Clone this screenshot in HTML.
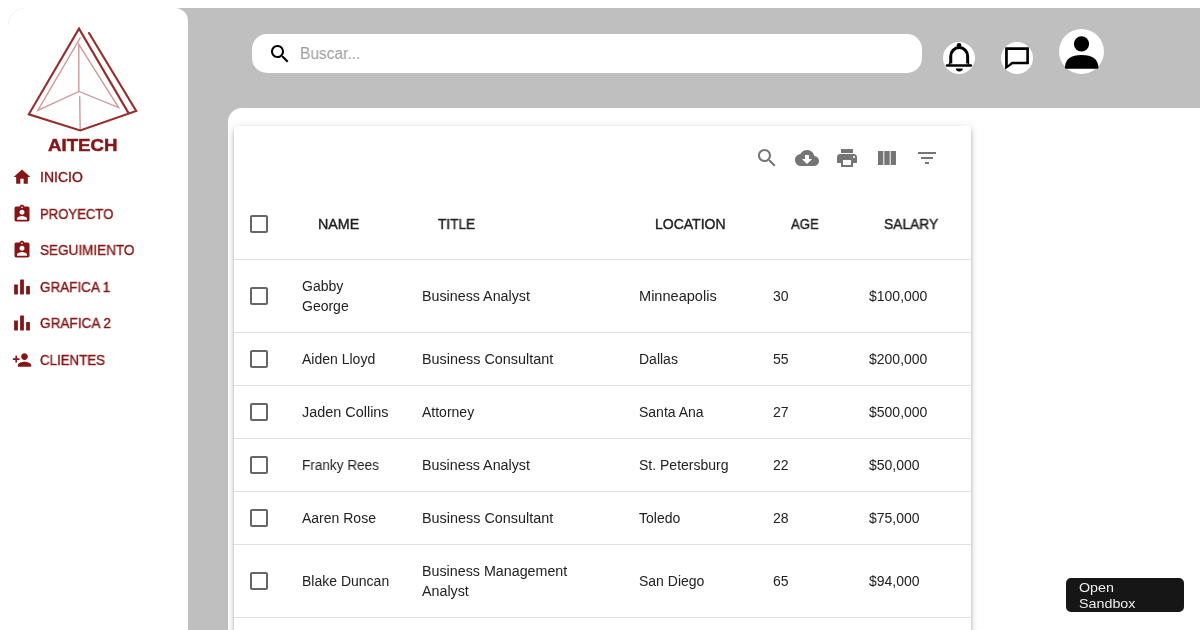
<!DOCTYPE html>
<html>
<head>
<meta charset="utf-8">
<style>
*{box-sizing:border-box;margin:0;padding:0}
html,body{width:1200px;height:630px;overflow:hidden;background:#fff;font-family:"Liberation Sans",sans-serif}
.nav,.th,.td,.ph,#logo-t,#sandbox{will-change:transform}
.abs{position:absolute}
#gray{position:absolute;left:8px;top:8px;width:1192px;height:622px;background:#bfbfbf;border-top-left-radius:18px}
#side{position:absolute;left:8px;top:8px;width:180px;height:622px;background:#fff;border-radius:18px 13px 0 0}
#content{position:absolute;left:228px;top:108px;width:972px;height:522px;background:#fff;border-top-left-radius:14px}
#card{position:absolute;left:234px;top:126px;width:737px;height:600px;background:#fff;border-radius:4px;
 box-shadow:0px 2px 4px -1px rgba(0,0,0,0.2),0px 4px 5px 0px rgba(0,0,0,0.14),0px 1px 10px 0px rgba(0,0,0,0.12)}
.nav{position:absolute;left:40px;height:20px;line-height:20px;font-size:14px;color:#861616;white-space:nowrap;transform-origin:0 0;-webkit-text-stroke:0.4px #861616}
#search{position:absolute;left:252px;top:34px;width:670px;height:39px;background:#fff;border-radius:15px}
.ph{position:absolute;left:300px;top:42px;height:24px;line-height:24px;font-size:16px;color:#9a9a9a;white-space:nowrap;transform-origin:0 0}
.circ{position:absolute;background:#fff;border-radius:50%}
.th{position:absolute;height:20px;line-height:20px;font-size:14px;color:#212121;white-space:nowrap;transform-origin:0 0;-webkit-text-stroke:0.4px #212121}
.td{position:absolute;line-height:20px;font-size:14px;color:#212121;white-space:nowrap;transform-origin:0 0}
.hr{position:absolute;left:234px;width:737px;height:1px;background:#e0e0e0}
.ico{position:absolute}
#sandbox{position:absolute;left:1066px;top:578px;width:118px;height:34px;background:#161616;border-radius:5px}
#sbt{position:absolute;left:1079px;top:580px;color:#eee;font-size:13px;line-height:15.8px;transform:scaleX(1.1);transform-origin:0 0;white-space:nowrap}
#logo-t{position:absolute;left:47.5px;transform:scaleX(1.08);top:135px;font-size:17.3px;line-height:20px;font-weight:bold;color:#861616;white-space:nowrap;transform-origin:0 0;-webkit-text-stroke:0.5px #861616}
</style>
</head>
<body>
<div id="gray"></div>
<div id="side"></div>
<div id="content"></div>
<div id="card"></div>
<svg class="ico" style="left:0;top:0" width="188" height="160" viewBox="0 0 188 160">
<g fill="none" stroke-linecap="round" stroke-linejoin="miter">
<path stroke="#cf9a9a" stroke-width="1.4" d="M80.2 37.8 L37.8 110.5 L79 91.4 L118.6 107.6 L78.8 44.5 L78.8 91.4 M79.7 96.7 L80.2 130"/>
<path stroke="#982c2c" stroke-width="2.1" d="M89 33 L136.2 111 L80.2 130.5 L28.8 114.3 L79 28.6 L128.1 112.4"/>
</g></svg>
<div id="logo-t">AITECH</div>
<div class="nav" style="top:167px;transform:scaleX(1.0)">INICIO</div>
<div class="nav" style="top:204px;transform:scaleX(0.936)">PROYECTO</div>
<div class="nav" style="top:240px;transform:scaleX(0.967)">SEGUIMIENTO</div>
<div class="nav" style="top:277px;transform:scaleX(0.962)">GRAFICA 1</div>
<div class="nav" style="top:313px;transform:scaleX(0.971)">GRAFICA 2</div>
<div class="nav" style="top:350px;transform:scaleX(0.95)">CLIENTES</div>
<svg class="ico" style="left:12px;top:167px" width="20" height="20" viewBox="0 0 24 24"><path fill="#861616" d="M10 20v-6h4v6h5v-8h3L12 3 2 12h3v8z"/></svg>
<svg class="ico" style="left:12px;top:204px" width="20" height="20" viewBox="0 0 24 24"><path fill="#861616" d="M19 3h-4.18C14.4 1.84 13.3 1 12 1c-1.3 0-2.4.84-2.82 2H5c-1.1 0-2 .9-2 2v14c0 1.1.9 2 2 2h14c1.1 0 2-.9 2-2V5c0-1.1-.9-2-2-2zm-7 0c.55 0 1 .45 1 1s-.45 1-1 1-1-.45-1-1 .45-1 1-1zm0 4c1.66 0 3 1.34 3 3s-1.34 3-3 3-3-1.34-3-3 1.34-3 3-3zm6 12H6v-1.4c0-2 4-3.1 6-3.1s6 1.1 6 3.1V19z"/></svg>
<svg class="ico" style="left:12px;top:240px" width="20" height="20" viewBox="0 0 24 24"><path fill="#861616" d="M19 3h-4.18C14.4 1.84 13.3 1 12 1c-1.3 0-2.4.84-2.82 2H5c-1.1 0-2 .9-2 2v14c0 1.1.9 2 2 2h14c1.1 0 2-.9 2-2V5c0-1.1-.9-2-2-2zm-7 0c.55 0 1 .45 1 1s-.45 1-1 1-1-.45-1-1 .45-1 1-1zm0 4c1.66 0 3 1.34 3 3s-1.34 3-3 3-3-1.34-3-3 1.34-3 3-3zm6 12H6v-1.4c0-2 4-3.1 6-3.1s6 1.1 6 3.1V19z"/></svg>
<svg class="ico" style="left:0;top:0" width="40" height="400"><g fill="#861616"><rect rx="0.4" x="14.1" y="284.4" width="3.8" height="10.100000000000023"/><rect rx="0.4" x="20.1" y="279.6" width="3.8" height="14.899999999999977"/><rect rx="0.4" x="26.1" y="286.1" width="3.8" height="8.399999999999977"/></g></svg>
<svg class="ico" style="left:0;top:0" width="40" height="400"><g fill="#861616"><rect rx="0.4" x="14.1" y="320.4" width="3.8" height="10.100000000000023"/><rect rx="0.4" x="20.1" y="315.6" width="3.8" height="14.899999999999977"/><rect rx="0.4" x="26.1" y="322.1" width="3.8" height="8.399999999999977"/></g></svg>
<svg class="ico" style="left:12px;top:350px" width="20" height="20" viewBox="0 0 24 24"><path fill="#861616" d="M15 12c2.21 0 4-1.79 4-4s-1.79-4-4-4-4 1.79-4 4 1.79 4 4 4zm-9-2V7H4v3H1v2h3v3h2v-3h3v-2H6zm9 4c-2.67 0-8 1.34-8 4v2h16v-2c0-2.66-5.33-4-8-4z"/></svg>
<div id="search"></div>
<svg class="ico" style="left:268px;top:42px" width="24" height="24" viewBox="0 0 24 24"><path fill="#000" d="M15.5 14h-.79l-.28-.27C15.41 12.59 16 11.11 16 9.5 16 5.91 13.09 3 9.5 3S3 5.91 3 9.5 5.91 16 9.5 16c1.61 0 3.09-.59 4.23-1.57l.27.28v.79l5 4.99L20.49 19l-4.99-5zm-6 0C7.01 14 5 11.99 5 9.5S7.01 5 9.5 5 14 7.01 14 9.5 11.99 14 9.5 14z"/></svg>
<div class="ph" style="transform:scaleX(0.97)">Buscar...</div>
<div class="circ" style="left:943px;top:42px;width:32px;height:32px"></div>
<div class="circ" style="left:1001px;top:42px;width:32px;height:32px"></div>
<div class="circ" style="left:1059px;top:29px;width:45px;height:45px"></div>
<svg class="ico" style="left:0;top:0" width="1200" height="100" viewBox="0 0 1200 100">
<g stroke="#000" fill="none" stroke-width="3">
<path d="M950.75 63.5 V56.2 A8.45 8.6 0 0 1 967.65 56.2 V63.5"/>
</g>
<path stroke="#000" stroke-width="2.6" stroke-linecap="round" d="M947.1 65.5 H970.9"/>
<path fill="#000" d="M949.2 62 Q949.2 64.5 946.5 64.5 H951 Z M968.7 62 Q968.7 64.5 971.5 64.5 H967 Z"/>
<circle cx="959" cy="45.3" r="2.3" fill="#000"/>
<path fill="#000" d="M955.8 68.6 H962.8 A3.5 2.8 0 0 1 955.8 68.6 Z"/>
<path fill="#000" fill-rule="evenodd" d="M1005.6 47.2 H1028.4 Q1028.9 47.2 1028.9 47.7 V63.8 Q1028.9 64.3 1028.4 64.3 H1012.6 L1006 69 Q1005.1 69.4 1005.1 68.6 V47.7 Q1005.1 47.2 1005.6 47.2 Z M1007.8 49.9 V65.2 L1011.6 61.7 H1026.3 V49.9 Z"/>
<circle cx="1081.5" cy="43.8" r="7.6" fill="#000"/>
<path fill="#000" d="M1064.9 67.2 Q1065.5 54.9 1081.6 54.9 Q1097.8 54.9 1098.4 67.2 Q1098.4 68.7 1097 68.7 H1066.3 Q1064.9 68.7 1064.9 67.2 Z"/>
</svg>
<svg class="ico" style="left:755px;top:146px" width="24" height="24" viewBox="0 0 24 24"><path fill="#757575" d="M15.5 14h-.79l-.28-.27C15.41 12.59 16 11.11 16 9.5 16 5.91 13.09 3 9.5 3S3 5.91 3 9.5 5.91 16 9.5 16c1.61 0 3.09-.59 4.23-1.57l.27.28v.79l5 4.99L20.49 19l-4.99-5zm-6 0C7.01 14 5 11.99 5 9.5S7.01 5 9.5 5 14 7.01 14 9.5 11.99 14 9.5 14z"/></svg>
<svg class="ico" style="left:795px;top:146px" width="24" height="24" viewBox="0 0 24 24"><path fill="#757575" d="M19.35 10.04C18.67 6.59 15.64 4 12 4 9.11 4 6.6 5.64 5.35 8.04 2.34 8.36 0 10.91 0 14c0 3.31 2.69 6 6 6h13c2.76 0 5-2.24 5-5 0-2.64-2.05-4.78-4.65-4.96zM17 13l-5 5-5-5h3V9h4v4h3z"/></svg>
<svg class="ico" style="left:835px;top:146px" width="24" height="24" viewBox="0 0 24 24"><path fill="#757575" d="M19 8H5c-1.66 0-3 1.34-3 3v6h4v4h12v-4h4v-6c0-1.66-1.34-3-3-3zm-3 11H8v-5h8v5zm3-7c-.55 0-1-.45-1-1s.45-1 1-1 1 .45 1 1-.45 1-1 1zm-1-9H6v4h12V3z"/></svg>
<svg class="ico" style="left:875px;top:146px" width="24" height="24" viewBox="0 0 24 24"><path fill="#757575" d="M14.67 5v14H9.33V5h5.34zm1 14H21V5h-5.33v14zm-7.34 0V5H3v14h5.33z"/></svg>
<svg class="ico" style="left:915px;top:146px" width="24" height="24" viewBox="0 0 24 24"><path fill="#757575" d="M10 18h4v-2h-4v2zM3 6v2h18V6H3zm3 7h12v-2H6v2z"/></svg>
<div class="th" style="left:318px;top:214px;transform:scaleX(1.02)">NAME</div>
<div class="th" style="left:438px;top:214px;transform:scaleX(0.974)">TITLE</div>
<div class="th" style="left:655px;top:214px;transform:scaleX(0.993)">LOCATION</div>
<div class="th" style="left:791px;top:214px;transform:scaleX(0.94)">AGE</div>
<div class="th" style="left:884px;top:214px;transform:scaleX(0.985)">SALARY</div>
<svg class="ico" style="left:247px;top:212px" width="24" height="24" viewBox="0 0 24 24"><path fill="#666" d="M19 5v14H5V5h14m0-2H5c-1.11 0-2 .9-2 2v14c0 1.1.89 2 2 2h14c1.1 0 2-.9 2-2V5c0-1.1-.9-2-2-2z"/></svg>
<div class="hr" style="top:259px"></div>
<svg class="ico" style="left:247px;top:284px" width="24" height="24" viewBox="0 0 24 24"><path fill="#666" d="M19 5v14H5V5h14m0-2H5c-1.11 0-2 .9-2 2v14c0 1.1.89 2 2 2h14c1.1 0 2-.9 2-2V5c0-1.1-.9-2-2-2z"/></svg>
<div class="td" style="left:302px;top:276px;transform:scaleX(1.0)">Gabby<br>George</div>
<div class="td" style="left:422px;top:286px;transform:scaleX(1.02)">Business Analyst</div>
<div class="td" style="left:639px;top:286px;transform:scaleX(1.04)">Minneapolis</div>
<div class="td" style="left:773px;top:286px;transform:scaleX(1.0)">30</div>
<div class="td" style="left:869px;top:286px;transform:scaleX(1.0)">$100,000</div>
<div class="hr" style="top:332px"></div>
<svg class="ico" style="left:247px;top:347px" width="24" height="24" viewBox="0 0 24 24"><path fill="#666" d="M19 5v14H5V5h14m0-2H5c-1.11 0-2 .9-2 2v14c0 1.1.89 2 2 2h14c1.1 0 2-.9 2-2V5c0-1.1-.9-2-2-2z"/></svg>
<div class="td" style="left:302px;top:349px;transform:scaleX(1.0)">Aiden Lloyd</div>
<div class="td" style="left:422px;top:349px;transform:scaleX(1.028)">Business Consultant</div>
<div class="td" style="left:639px;top:349px;transform:scaleX(1.0)">Dallas</div>
<div class="td" style="left:773px;top:349px;transform:scaleX(1.0)">55</div>
<div class="td" style="left:869px;top:349px;transform:scaleX(1.0)">$200,000</div>
<div class="hr" style="top:385px"></div>
<svg class="ico" style="left:247px;top:400px" width="24" height="24" viewBox="0 0 24 24"><path fill="#666" d="M19 5v14H5V5h14m0-2H5c-1.11 0-2 .9-2 2v14c0 1.1.89 2 2 2h14c1.1 0 2-.9 2-2V5c0-1.1-.9-2-2-2z"/></svg>
<div class="td" style="left:302px;top:402px;transform:scaleX(1.03)">Jaden Collins</div>
<div class="td" style="left:422px;top:402px;transform:scaleX(1.0)">Attorney</div>
<div class="td" style="left:639px;top:402px;transform:scaleX(1.0)">Santa Ana</div>
<div class="td" style="left:773px;top:402px;transform:scaleX(1.0)">27</div>
<div class="td" style="left:869px;top:402px;transform:scaleX(1.0)">$500,000</div>
<div class="hr" style="top:438px"></div>
<svg class="ico" style="left:247px;top:453px" width="24" height="24" viewBox="0 0 24 24"><path fill="#666" d="M19 5v14H5V5h14m0-2H5c-1.11 0-2 .9-2 2v14c0 1.1.89 2 2 2h14c1.1 0 2-.9 2-2V5c0-1.1-.9-2-2-2z"/></svg>
<div class="td" style="left:302px;top:455px;transform:scaleX(0.97)">Franky Rees</div>
<div class="td" style="left:422px;top:455px;transform:scaleX(1.02)">Business Analyst</div>
<div class="td" style="left:639px;top:455px;transform:scaleX(1.0)">St. Petersburg</div>
<div class="td" style="left:773px;top:455px;transform:scaleX(1.0)">22</div>
<div class="td" style="left:869px;top:455px;transform:scaleX(1.0)">$50,000</div>
<div class="hr" style="top:491px"></div>
<svg class="ico" style="left:247px;top:506px" width="24" height="24" viewBox="0 0 24 24"><path fill="#666" d="M19 5v14H5V5h14m0-2H5c-1.11 0-2 .9-2 2v14c0 1.1.89 2 2 2h14c1.1 0 2-.9 2-2V5c0-1.1-.9-2-2-2z"/></svg>
<div class="td" style="left:302px;top:508px;transform:scaleX(1.0)">Aaren Rose</div>
<div class="td" style="left:422px;top:508px;transform:scaleX(1.028)">Business Consultant</div>
<div class="td" style="left:639px;top:508px;transform:scaleX(1.0)">Toledo</div>
<div class="td" style="left:773px;top:508px;transform:scaleX(1.0)">28</div>
<div class="td" style="left:869px;top:508px;transform:scaleX(1.0)">$75,000</div>
<div class="hr" style="top:544px"></div>
<svg class="ico" style="left:247px;top:569px" width="24" height="24" viewBox="0 0 24 24"><path fill="#666" d="M19 5v14H5V5h14m0-2H5c-1.11 0-2 .9-2 2v14c0 1.1.89 2 2 2h14c1.1 0 2-.9 2-2V5c0-1.1-.9-2-2-2z"/></svg>
<div class="td" style="left:302px;top:571px;transform:scaleX(1.0)">Blake Duncan</div>
<div class="td" style="left:422px;top:561px;transform:scaleX(1.02)">Business Management<br>Analyst</div>
<div class="td" style="left:639px;top:571px;transform:scaleX(1.0)">San Diego</div>
<div class="td" style="left:773px;top:571px;transform:scaleX(1.0)">65</div>
<div class="td" style="left:869px;top:571px;transform:scaleX(1.0)">$94,000</div>
<div class="hr" style="top:617px"></div>
<div id="sandbox"></div><div id="sbt">Open<br>Sandbox</div>
</body>
</html>
